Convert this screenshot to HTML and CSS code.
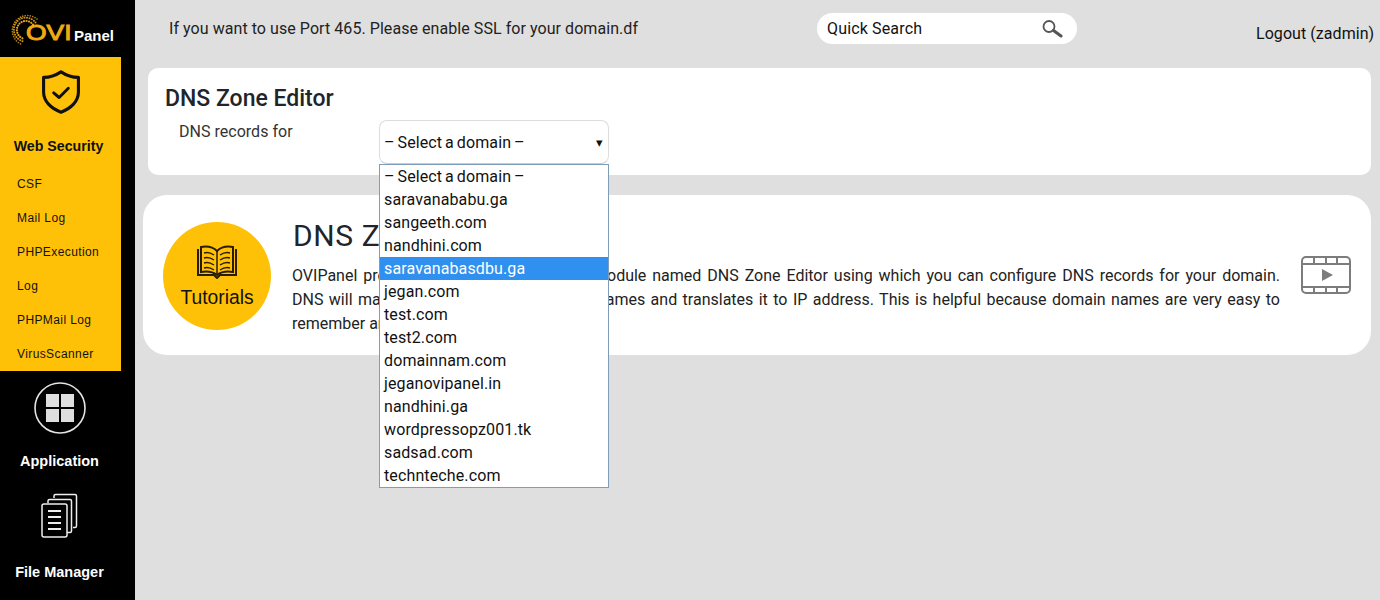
FILE: index.html
```html
<!DOCTYPE html>
<html lang="en">
<head>
<meta charset="utf-8">
<title>DNS Zone Editor</title>
<link rel="stylesheet" href="styles.css">
</head>
<body>
<div class="app">
  <aside class="sidebar">
    <div class="logo">
      <svg class="logo-mark" width="34" height="34" viewBox="0 0 34 34">
        <path d="M27 6 A15 15 0 1 0 12 31.500" fill="none" stroke="#b08018" stroke-width="1.700" stroke-linecap="round" stroke-dasharray="0 2.500"/>
        <path d="M25.500 9.500 A12 12 0 1 0 13 28.300" fill="none" stroke="#d09414" stroke-width="2" stroke-linecap="round" stroke-dasharray="0 2.500"/>
        <path d="M23 11.500 A9 9 0 1 0 14 25.800" fill="none" stroke="#e8a510" stroke-width="2.200" stroke-linecap="round" stroke-dasharray="0 2.500"/>
      </svg>
      <span class="logo-ovi">OVI</span><span class="logo-panel">Panel</span>
    </div>
    <section class="menu-active">
      <svg class="icon-shield" width="40" height="47" viewBox="0 0 42 48">
        <path d="M21 2 C27 6 33 8 40 8 V24 C40 34 32 42 21 46 C10 42 2 34 2 24 V8 C9 8 15 6 21 2 Z" fill="none" stroke="#111" stroke-width="3.400" stroke-linejoin="round"/>
        <path d="M13 25 L19 30 L29 20" fill="none" stroke="#111" stroke-width="3.200" stroke-linecap="round" stroke-linejoin="round"/>
      </svg>
      <h2 class="menu-title dark">Web Security</h2>
      <ul class="submenu">
        <li>CSF</li>
        <li>Mail Log</li>
        <li>PHPExecution</li>
        <li>Log</li>
        <li>PHPMail Log</li>
        <li>VirusScanner</li>
      </ul>
    </section>
    <section class="menu-item">
      <svg width="54" height="52" viewBox="0 0 54 52">
        <circle cx="27" cy="26" r="25" fill="none" stroke="#e4e4e4" stroke-width="1.600"/>
        <rect x="13" y="12" width="13" height="13" fill="#dedede"/>
        <rect x="28" y="12" width="13" height="13" fill="#dedede"/>
        <rect x="13" y="27" width="13" height="13" fill="#dedede"/>
        <rect x="28" y="27" width="13" height="13" fill="#dedede"/>
      </svg>
      <h2 class="menu-title app-title">Application</h2>
    </section>
    <section class="menu-item files">
      <svg width="40" height="46" viewBox="0 0 40 46">
        <path d="M14 5 V3 a1.500 1.500 0 0 1 1.500 -1.500 H35 a1.500 1.500 0 0 1 1.500 1.500 V33 a1.500 1.500 0 0 1 -1.500 1.500 H33" fill="none" stroke="#eee" stroke-width="1.500"/>
        <path d="M8 10 V8 a1.500 1.500 0 0 1 1.500 -1.500 H30 a1.500 1.500 0 0 1 1.500 1.500 V38 a1.500 1.500 0 0 1 -1.500 1.500 H27" fill="none" stroke="#eee" stroke-width="1.500"/>
        <rect x="2" y="11" width="25" height="33" rx="2" fill="#000" stroke="#eee" stroke-width="1.500"/>
        <path d="M8 18 H21 M8 24 H21 M8 30 H21 M8 36 H21" stroke="#eee" stroke-width="2"/>
      </svg>
      <h2 class="menu-title">File Manager</h2>
    </section>
  </aside>

  <main class="main">
    <header class="topbar">
      <p class="notice">If you want to use Port 465. Please enable SSL for your domain.df</p>
      <div class="search">
        <span>Quick Search</span>
        <svg width="22" height="20" viewBox="0 0 22 20">
          <circle cx="8" cy="7.500" r="5.500" fill="none" stroke="#555" stroke-width="1.800"/>
          <path d="M12.500 11.500 L20 17" stroke="#555" stroke-width="3" stroke-linecap="round"/>
        </svg>
      </div>
      <div class="logout">Logout (zadmin)</div>
    </header>

    <section class="card editor">
      <h1 class="editor-title">DNS Zone Editor</h1>
      <div class="record-row">
        <label class="record-label">DNS records for</label>
        <div class="select-wrap">
          <div class="select"><span class="placeholder">– Select a domain –</span><span class="arrow">▾</span></div>
          <ul class="dropdown">
            <li class="placeholder">– Select a domain –</li>
            <li>saravanababu.ga</li>
            <li>sangeeth.com</li>
            <li>nandhini.com</li>
            <li class="selected">saravanabasdbu.ga</li>
            <li>jegan.com</li>
            <li>test.com</li>
            <li>test2.com</li>
            <li>domainnam.com</li>
            <li>jeganovipanel.in</li>
            <li>nandhini.ga</li>
            <li>wordpressopz001.tk</li>
            <li>sadsad.com</li>
            <li>technteche.com</li>
          </ul>
        </div>
      </div>
    </section>

    <section class="card tutorial">
      <div class="tutorial-badge">
        <svg width="44" height="34" viewBox="0 0 44 34">
          <path d="M3 4 V30 H19 L22 33 L25 30 H41 V4" fill="none" stroke="#2a1c00" stroke-width="2"/>
          <path d="M6 2 C12 1 18 2 22 6 C26 2 32 1 38 2 V27 C32 26 26 27 22 30 C18 27 12 26 6 27 Z" fill="none" stroke="#2a1c00" stroke-width="2"/>
          <path d="M22 6 V30 M9 8 C12 7 16 8 19 10 M9 13 C12 12 16 13 19 15 M9 18 C12 17 16 18 19 20 M9 23 C12 22 16 23 19 25 M35 8 C32 7 28 8 25 10 M35 13 C32 12 28 13 25 15 M35 18 C32 17 28 18 25 20 M35 23 C32 22 28 23 25 25" fill="none" stroke="#2a1c00" stroke-width="1.500"/>
        </svg>
        <span>Tutorials</span>
      </div>
      <div class="tutorial-body">
        <h2 class="tutorial-title">DNS Zone Editor</h2>
        <p class="tutorial-text">
          <span class="line">OVIPanel provides its users with a basic module named DNS Zone Editor using which you can configure DNS records for your domain.</span>
          <span class="line">DNS will map your website's own domain names and translates it to IP address. This is helpful because domain names are very easy to</span>
          <span class="line last">remember and also easy to share.</span>
        </p>
      </div>
      <svg class="video-icon" width="50" height="38" viewBox="0 0 50 38">
        <rect x="1" y="1" width="48" height="36" rx="4" fill="none" stroke="#7c7c7c" stroke-width="2"/>
        <path d="M1 8 H49 M1 31 H49 M13 1 V8 M25 1 V8 M36 1 V8 M13 31 V37 M25 31 V37 M36 31 V37" stroke="#7c7c7c" stroke-width="2"/>
        <path d="M21 13 L32 19 L21 25 Z" fill="#7c7c7c"/>
      </svg>
    </section>
  </main>
</div>
</body>
</html>
```

FILE: styles.css
```css
* { box-sizing: border-box; }
html, body { margin: 0; height: 100%; overflow: hidden; }
body { font-family: Roboto, "Liberation Sans", sans-serif; font-size: 16px; color: #212529; background: #dfdfdf; }
ul { list-style: none; margin: 0; padding: 0; }
h1, h2, p { margin: 0; }

.app { display: flex; height: 600px; }

.sidebar { width: 135px; flex: none; background: #000; display: flex; flex-direction: column; }
.logo { height: 57px; display: flex; align-items: center; padding: 9px 0 0 26px; position: relative; font-family: "Liberation Sans", sans-serif; font-weight: 700; }
.logo-mark { position: absolute; left: 10px; top: 13px; }
.logo-ovi { position: relative; display: inline-block; color: #eeaa14; font-size: 22px; font-weight: 400; -webkit-text-stroke: 1px #eeaa14; transform: scaleX(1.2); transform-origin: left center; margin-right: 10px; }
.logo-panel { position: relative; color: #fff; font-size: 15px; padding-top: 5px; }

.menu-active { width: 121px; height: 314px; background: #ffc107; display: flex; flex-direction: column; align-items: center; padding-top: 13px; }
.icon-shield { display: block; }
.menu-title { font-family: "Liberation Sans", sans-serif; font-size: 14.500px; line-height: 18px; font-weight: 700; color: #fff; text-align: center; }
.menu-title.dark { color: #111; margin: 23px 4px 0 0; font-size: 14.200px; }
.submenu { align-self: stretch; padding: 12px 0 0 17px; font-family: "Liberation Sans", sans-serif; font-size: 12px; letter-spacing: .4px; color: #111; }
.submenu li { height: 34px; line-height: 34px; }

.menu-item { width: 119px; display: flex; flex-direction: column; align-items: center; padding-top: 11px; }
.menu-item .app-title { margin-top: 18px; }
.files { padding-top: 23px; }
.files .menu-title { margin-top: 24px; }

.main { flex: 1; min-width: 0; padding-right: 9px; }
.topbar { height: 68px; display: flex; align-items: flex-start; padding-left: 34px; position: relative; }
.notice { margin-top: 19px; line-height: 19px; width: 648px; flex: none; color: #222; letter-spacing: .06px; white-space: nowrap; }
.search { width: 260px; height: 31px; margin-top: 13px; background: #fff; border-radius: 16px; display: flex; align-items: center; justify-content: space-between; padding: 0 14px 0 10px; color: #111; flex: none; letter-spacing: .15px; }
.logout { margin: 24px 0 0 179px; line-height: 19px; color: #111; white-space: nowrap; letter-spacing: .06px; }

.card { background: #fff; }
.editor { margin-left: 13px; height: 107px; border-radius: 10px; padding: 17px 16px 0 17px; }
.editor-title { font-size: 23px; font-weight: 500; line-height: 28px; color: #212529; }
.record-row { display: flex; margin-top: 7px; }
.record-label { width: 214px; padding-left: 14px; line-height: 19px; margin-top: 2px; color: #333; flex: none; letter-spacing: .02px; }
.select-wrap { position: relative; width: 230px; }
.select { height: 44px; border: 1px solid #ddd; border-bottom-color: #ccc; border-radius: 8px; display: flex; align-items: center; justify-content: space-between; padding: 0 5px 0 4px; background: #fff; color: #111; letter-spacing: .12px; }
.placeholder { word-spacing: -1.200px; }
.arrow { font-size: 13px; line-height: 1; }
.dropdown { position: absolute; z-index: 2; left: 0; top: 44px; width: 230px; background: #fff; border: 1px solid #7f9db9; color: #111; letter-spacing: .12px; }
.dropdown li { height: 23px; line-height: 23px; padding-left: 4px; white-space: nowrap; }
.dropdown .selected { background: #3090f0; color: #fff; }

.tutorial { margin: 20px 0 0 8px; height: 160px; border-radius: 24px; display: flex; align-items: flex-start; padding: 27px 20px 0 20px; }
.tutorial-badge { width: 108px; height: 108px; flex: none; border-radius: 50%; background: #ffc107; display: flex; flex-direction: column; align-items: center; padding-top: 23px; color: #111; font-family: "Liberation Sans", sans-serif; font-size: 19.300px; }
.tutorial-badge span { margin-top: 8px; line-height: 21px; }
.tutorial-body { width: 988px; margin-left: 21px; flex: none; }
.tutorial-title { font-size: 30px; font-weight: 400; line-height: 28px; margin: 0 0 14px 1px; color: #212529; letter-spacing: .6px; }
.tutorial-text { line-height: 24px; color: #222; height: 72px; overflow: hidden; }
.line { display: block; text-align: justify; text-align-last: justify; white-space: normal; }
.line.last { text-align-last: left; }
.video-icon { flex: none; margin: 34px 0 0 21px; }
```
